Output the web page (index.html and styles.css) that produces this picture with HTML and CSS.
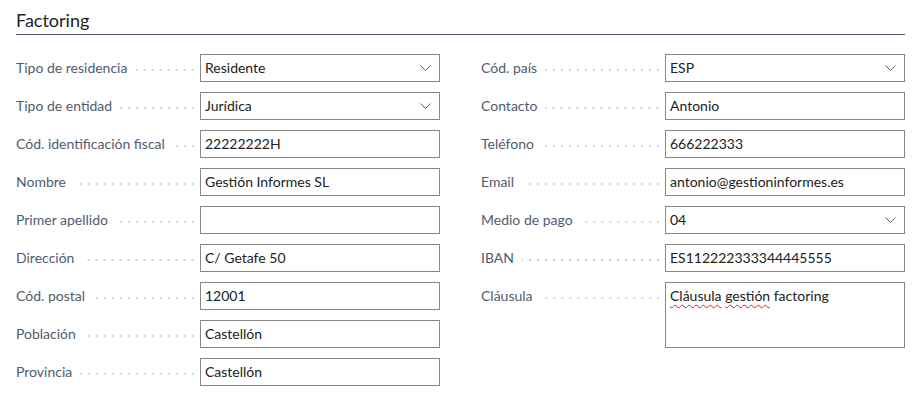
FILE: index.html
```html
<!DOCTYPE html>
<html lang="es">
<head>
<meta charset="utf-8">
<title>Factoring</title>
<link rel="stylesheet" href="styles.css">
</head>
<body>
<section class="group">
  <h2 class="group-title">Factoring</h2>
  <div class="columns">
    <div class="col">
      <div class="field"><div class="caption"><span class="lbl">Tipo de residencia</span><span class="leader"></span></div><div class="ctrl select"><span class="val">Residente</span><svg class="chev" width="11" height="6" viewBox="0 0 11 6"><path d="M0.5 0.5 L5.5 5.5 L10.5 0.5" fill="none" stroke="#605e5c" stroke-width="1"/></svg></div></div>
      <div class="field"><div class="caption"><span class="lbl">Tipo de entidad</span><span class="leader"></span></div><div class="ctrl select"><span class="val">Jurídica</span><svg class="chev" width="11" height="6" viewBox="0 0 11 6"><path d="M0.5 0.5 L5.5 5.5 L10.5 0.5" fill="none" stroke="#605e5c" stroke-width="1"/></svg></div></div>
      <div class="field"><div class="caption"><span class="lbl">Cód. identificación fiscal</span><span class="leader"></span></div><div class="ctrl"><span class="val">22222222H</span></div></div>
      <div class="field"><div class="caption"><span class="lbl">Nombre</span><span class="leader"></span></div><div class="ctrl"><span class="val">Gestión Informes SL</span></div></div>
      <div class="field"><div class="caption"><span class="lbl">Primer apellido</span><span class="leader"></span></div><div class="ctrl"><span class="val"></span></div></div>
      <div class="field"><div class="caption"><span class="lbl">Dirección</span><span class="leader"></span></div><div class="ctrl"><span class="val">C/ Getafe 50</span></div></div>
      <div class="field"><div class="caption"><span class="lbl">Cód. postal</span><span class="leader"></span></div><div class="ctrl"><span class="val">12001</span></div></div>
      <div class="field"><div class="caption"><span class="lbl">Población</span><span class="leader"></span></div><div class="ctrl"><span class="val">Castellón</span></div></div>
      <div class="field"><div class="caption"><span class="lbl">Provincia</span><span class="leader"></span></div><div class="ctrl"><span class="val">Castellón</span></div></div>
    </div>
    <div class="col">
      <div class="field"><div class="caption"><span class="lbl">Cód. país</span><span class="leader"></span></div><div class="ctrl select"><span class="val">ESP</span><svg class="chev" width="11" height="6" viewBox="0 0 11 6"><path d="M0.5 0.5 L5.5 5.5 L10.5 0.5" fill="none" stroke="#605e5c" stroke-width="1"/></svg></div></div>
      <div class="field"><div class="caption"><span class="lbl">Contacto</span><span class="leader"></span></div><div class="ctrl"><span class="val">Antonio</span></div></div>
      <div class="field"><div class="caption"><span class="lbl">Teléfono</span><span class="leader"></span></div><div class="ctrl"><span class="val">666222333</span></div></div>
      <div class="field"><div class="caption"><span class="lbl">Email</span><span class="leader"></span></div><div class="ctrl"><span class="val">antonio@gestioninformes.es</span></div></div>
      <div class="field"><div class="caption"><span class="lbl">Medio de pago</span><span class="leader"></span></div><div class="ctrl select"><span class="val">04</span><svg class="chev" width="11" height="6" viewBox="0 0 11 6"><path d="M0.5 0.5 L5.5 5.5 L10.5 0.5" fill="none" stroke="#605e5c" stroke-width="1"/></svg></div></div>
      <div class="field"><div class="caption"><span class="lbl">IBAN</span><span class="leader"></span></div><div class="ctrl"><span class="val">ES112222333344445555</span></div></div>
      <div class="field field-tall"><div class="caption"><span class="lbl">Cláusula</span><span class="leader"></span></div><div class="ctrl multiline"><span class="val"><span class="misspelled">Cláusula</span> <span class="misspelled">gestión</span> factoring</span></div></div>
    </div>
  </div>
</section>
</body>
</html>
```

FILE: styles.css
```css
html, body {
  margin: 0;
  padding: 0;
  background: #ffffff;
}

body {
  font-family: "Lato", "Open Sans", "Liberation Sans", sans-serif;
  font-size: 14px;
  color: #212121;
}

.group {
  padding: 8px 9px 0 16px;
}

.group-title {
  margin: 0;
  font-weight: 400;
  font-size: 18px;
  line-height: 24px;
  color: #212121;
  padding-bottom: 2px;
  border-bottom: 1px solid #505c6d;
}

.columns {
  display: grid;
  grid-template-columns: 424px 424px;
  column-gap: 41px;
  padding-top: 19px;
}

.col {
  display: flex;
  flex-direction: column;
  row-gap: 10px;
}

.field {
  display: grid;
  grid-template-columns: 184px 1fr;
  height: 28px;
}

.field-tall {
  height: 66px;
}

.caption {
  display: flex;
  align-items: flex-start;
  height: 28px;
  color: #505c6d;
  line-height: 28px;
  white-space: nowrap;
}

.leader {
  flex: 1;
  height: 2px;
  margin: 15px 6px 0 8px;
  background-image: linear-gradient(to right, transparent 0 6px, #d4d4d4 6px 8px);
  background-size: 8px 2px;
  background-repeat: repeat-x;
  background-position: right top;
}

.ctrl {
  box-sizing: border-box;
  border: 1px solid #8a8886;
  height: 28px;
  display: flex;
  align-items: center;
  padding: 0 8px 0 4px;
  background: #fff;
}

.multiline {
  height: 66px;
  align-items: flex-start;
  padding-top: 3px;
}

.val {
  flex: 1;
  white-space: nowrap;
  line-height: 20px;
}

.chev {
  display: block;
  flex: none;
}

.misspelled {
  text-decoration: underline wavy #e02020;
  text-decoration-thickness: 1px;
  text-underline-offset: 3px;
}
```
